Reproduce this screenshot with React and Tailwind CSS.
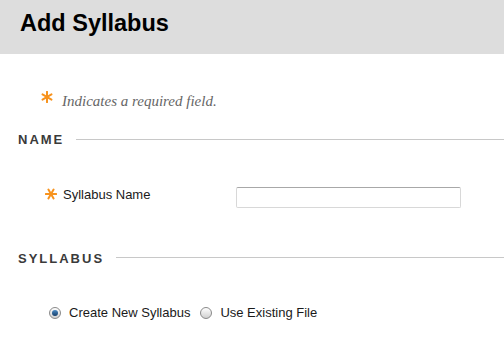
import React from "react";

function Asterisk({ horizontal = false, className = "" }) {
  const angles = horizontal ? [0, 60, 120] : [90, 30, 150];
  return (
    <svg width="12" height="12" viewBox="0 0 12 12" className={className}>
      {angles.map((a) => {
        const r = (a * Math.PI) / 180;
        const dx = Math.cos(r) * 5.2;
        const dy = Math.sin(r) * 5.2;
        return (
          <line
            key={a}
            x1={6 - dx}
            y1={6 - dy}
            x2={6 + dx}
            y2={6 + dy}
            stroke="#f7931e"
            strokeWidth="2"
            strokeLinecap="round"
          />
        );
      })}
    </svg>
  );
}

function SectionHeading({ children, lineClass = "" }) {
  return (
    <div className="flex items-center pl-[18px]">
      <span className="text-[13px] leading-[16px] font-bold tracking-[2px] text-[#3a3a3a]">
        {children}
      </span>
      <div className={"ml-3 h-px flex-1 bg-[#c8c8c8] " + lineClass} />
    </div>
  );
}

function Radio({ checked }) {
  return (
    <span className="flex h-[12px] w-[12px] items-center justify-center rounded-full border border-[#8a8a8a] bg-gradient-to-b from-[#ffffff] to-[#d0d0d0]">
      {checked && (
        <span className="h-[6px] w-[6px] rounded-full bg-gradient-to-b from-[#4a8ac4] to-[#163f6b]" />
      )}
    </span>
  );
}

export default function App() {
  return (
    <div
      className="h-[350px] w-[504px] overflow-hidden bg-white"
      style={{ fontFamily: '"Liberation Sans", Arial, sans-serif' }}
    >
      <div className="h-[54px] bg-[#dddddd] pl-[20px] pt-[9px]">
        <h1 className="text-[23.5px] leading-[28px] font-bold text-black">Add Syllabus</h1>
      </div>

      <div className="mt-[37px] flex items-start pl-[41px]">
        <Asterisk />
        <span
          className="ml-[9px] mt-[2px] text-[15px] leading-[16px] italic text-[#666666]"
          style={{ fontFamily: '"Liberation Serif", "Times New Roman", serif' }}
        >
          Indicates a required field.
        </span>
      </div>

      <div className="mt-[23px]">
        <SectionHeading lineClass="mb-[1px]">NAME</SectionHeading>
      </div>

      <div className="mt-[39px] flex items-start">
        <div className="flex w-[236px] items-start pl-[45px]">
          <Asterisk horizontal className="mt-[1px]" />
          <label className="ml-[6px] text-[13px] leading-[16px] text-[#1a1a1a]">Syllabus Name</label>
        </div>
        <input
          type="text"
          className="h-[21px] w-[225px] rounded-[2px] border border-[#d8d8d8] border-t-[#a8a8a8] bg-white outline-none"
        />
      </div>

      <div className="mt-[43px]">
        <SectionHeading lineClass="mb-[4px]">SYLLABUS</SectionHeading>
      </div>

      <div className="mt-[38px] flex items-center pl-[49px] text-[13px] leading-[16px] text-[#1a1a1a]">
        <Radio checked />
        <span className="ml-[8px]">Create New Syllabus</span>
        <span className="ml-[10px]">
          <Radio />
        </span>
        <span className="ml-[8px]">Use Existing File</span>
      </div>
    </div>
  );
}
